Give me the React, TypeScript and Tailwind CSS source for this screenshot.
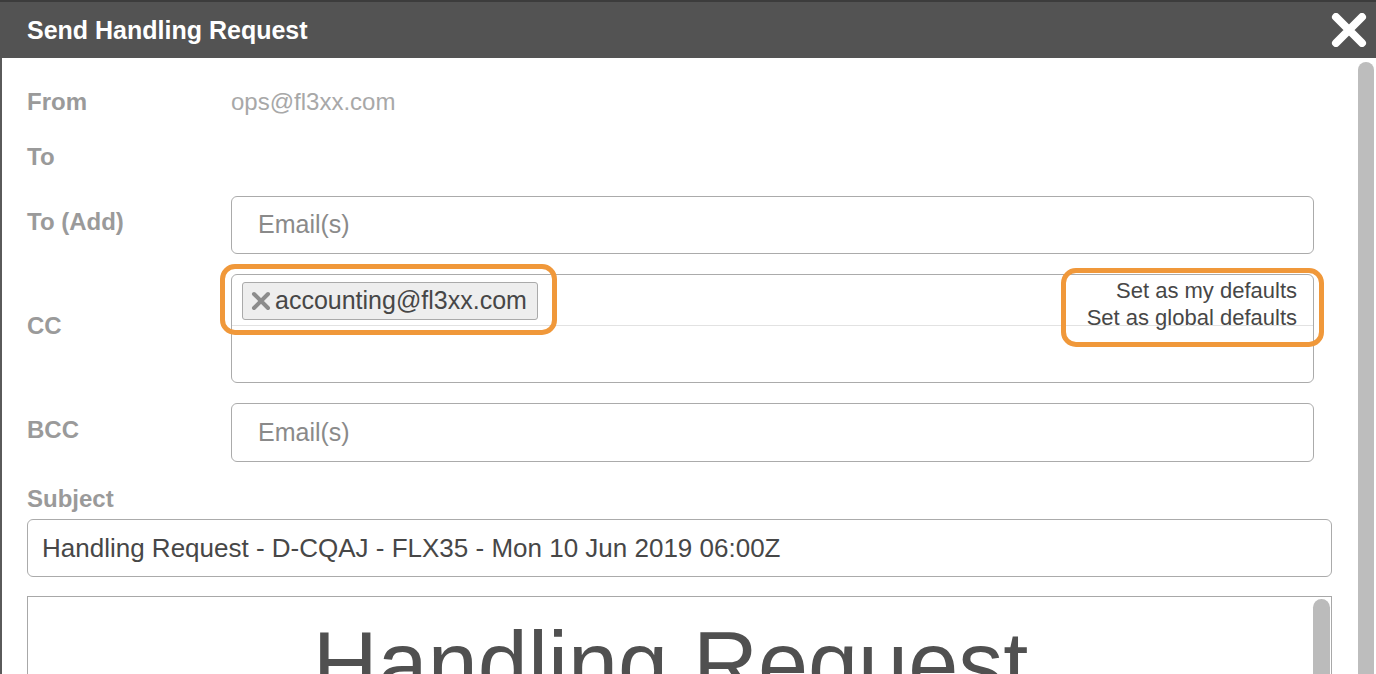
import React from 'react';

const font = { fontFamily: '"Liberation Sans", Arial, sans-serif' };

const Label: React.FC<{ children: React.ReactNode }> = ({ children }) => (
  <div className="w-[204px] shrink-0 pb-[6px] text-[24px] font-bold text-[#9a9a9a]">{children}</div>
);

const EmailInput: React.FC = () => (
  <div className="flex h-full w-[1083px] items-center rounded-[6px] border-[1.5px] border-[#ababab] bg-white pl-[26px] text-[25px] text-[#8a8a8a]">
    Email(s)
  </div>
);

const CloseIcon: React.FC = () => (
  <svg width="36" height="34" viewBox="0 0 36 34" fill="none">
    <path d="M5 4 L31 30 M31 4 L5 30" stroke="white" strokeWidth="8" strokeLinecap="round" />
  </svg>
);

const App: React.FC = () => {
  return (
    <div className="h-[674px] w-[1376px] overflow-hidden bg-white" style={font}>
      {/* title bar */}
      <div className="flex h-[58px] items-center justify-between border-t-2 border-[#3c3c3c] bg-[#535353] pl-[27px] pr-[9px]">
        <span className="pt-[2px] text-[25px] font-bold text-white">Send Handling Request</span>
        <CloseIcon />
      </div>

      <div className="flex h-[616px]">
        <div className="w-[2px] bg-[#5a5a5a]" />
        <div className="relative flex-1 pl-[25px] pt-[19px]">
          <div className="flex h-[55px] items-center">
            <Label>From</Label>
            <span className="pb-[6px] text-[24px] text-[#a8a8a8]">ops@fl3xx.com</span>
          </div>
          <div className="flex h-[55px] items-center">
            <Label>To</Label>
          </div>
          <div className="mt-[9px] flex h-[58px] items-center">
            <Label>To (Add)</Label>
            <EmailInput />
          </div>

          {/* CC */}
          <div className="mt-[20px] flex h-[109px] items-center">
            <Label>CC</Label>
            <div className="relative flex h-full w-[1083px] flex-col rounded-[6px] border-[1.5px] border-[#ababab] bg-white">
              <div className="flex h-[51px] items-start justify-between border-b border-[#e2e2e2] pl-[10px] pr-[16px] pt-[7px]">
                <div className="flex h-[38px] items-center gap-[4px] rounded-[3px] border border-[#aaaaaa] bg-[#eeeeee] pl-[8px] pr-[10px]">
                  <svg width="20" height="20" viewBox="0 0 20 20">
                    <path d="M3 3 L17 17 M17 3 L3 17" stroke="#8c8c8c" strokeWidth="4" strokeLinecap="round" />
                  </svg>
                  <span className="text-[25px] text-[#474747]">accounting@fl3xx.com</span>
                </div>
                <div className="-mt-[5px] text-right text-[22px] leading-[27px] text-[#474747]">
                  <div>Set as my defaults</div>
                  <div>Set as global defaults</div>
                </div>
              </div>
              <div className="absolute -left-[12px] -top-[11px] h-[71px] w-[337px] rounded-[15px] border-[5px] border-[#f0983a]" />
              <div className="absolute -right-[11px] -top-[7px] h-[79px] w-[263px] rounded-[15px] border-[5px] border-[#f0983a]" />
            </div>
          </div>

          <div className="mt-[20px] flex h-[59px] items-center">
            <Label>BCC</Label>
            <EmailInput />
          </div>

          <div className="mt-[22px] text-[24px] font-bold leading-[30px] text-[#9a9a9a]">Subject</div>
          <div className="mt-[5px] flex h-[58px] w-[1305px] items-center rounded-[6px] border-[1.5px] border-[#ababab] pl-[14px] text-[26px] text-[#474747]">
            Handling Request - D-CQAJ - FLX35 - Mon 10 Jun 2019 06:00Z
          </div>

          <div className="mt-[19px] flex h-[200px] w-[1305px] border-[1.5px] border-[#a8a8a8]">
            <div className="flex-1 pt-[16px] text-center text-[90px] leading-[1.15] text-[#505050]">Handling Request</div>
            <div className="mr-[1px] mt-[2px] w-[17px] rounded-t-full bg-[#bbbbbb]" />
          </div>
        </div>
        {/* outer scrollbar */}
        <div className="mr-[2px] mt-[4px] w-[16px] rounded-t-full bg-[#bdbdbd]" />
      </div>
    </div>
  );
};

export default App;
